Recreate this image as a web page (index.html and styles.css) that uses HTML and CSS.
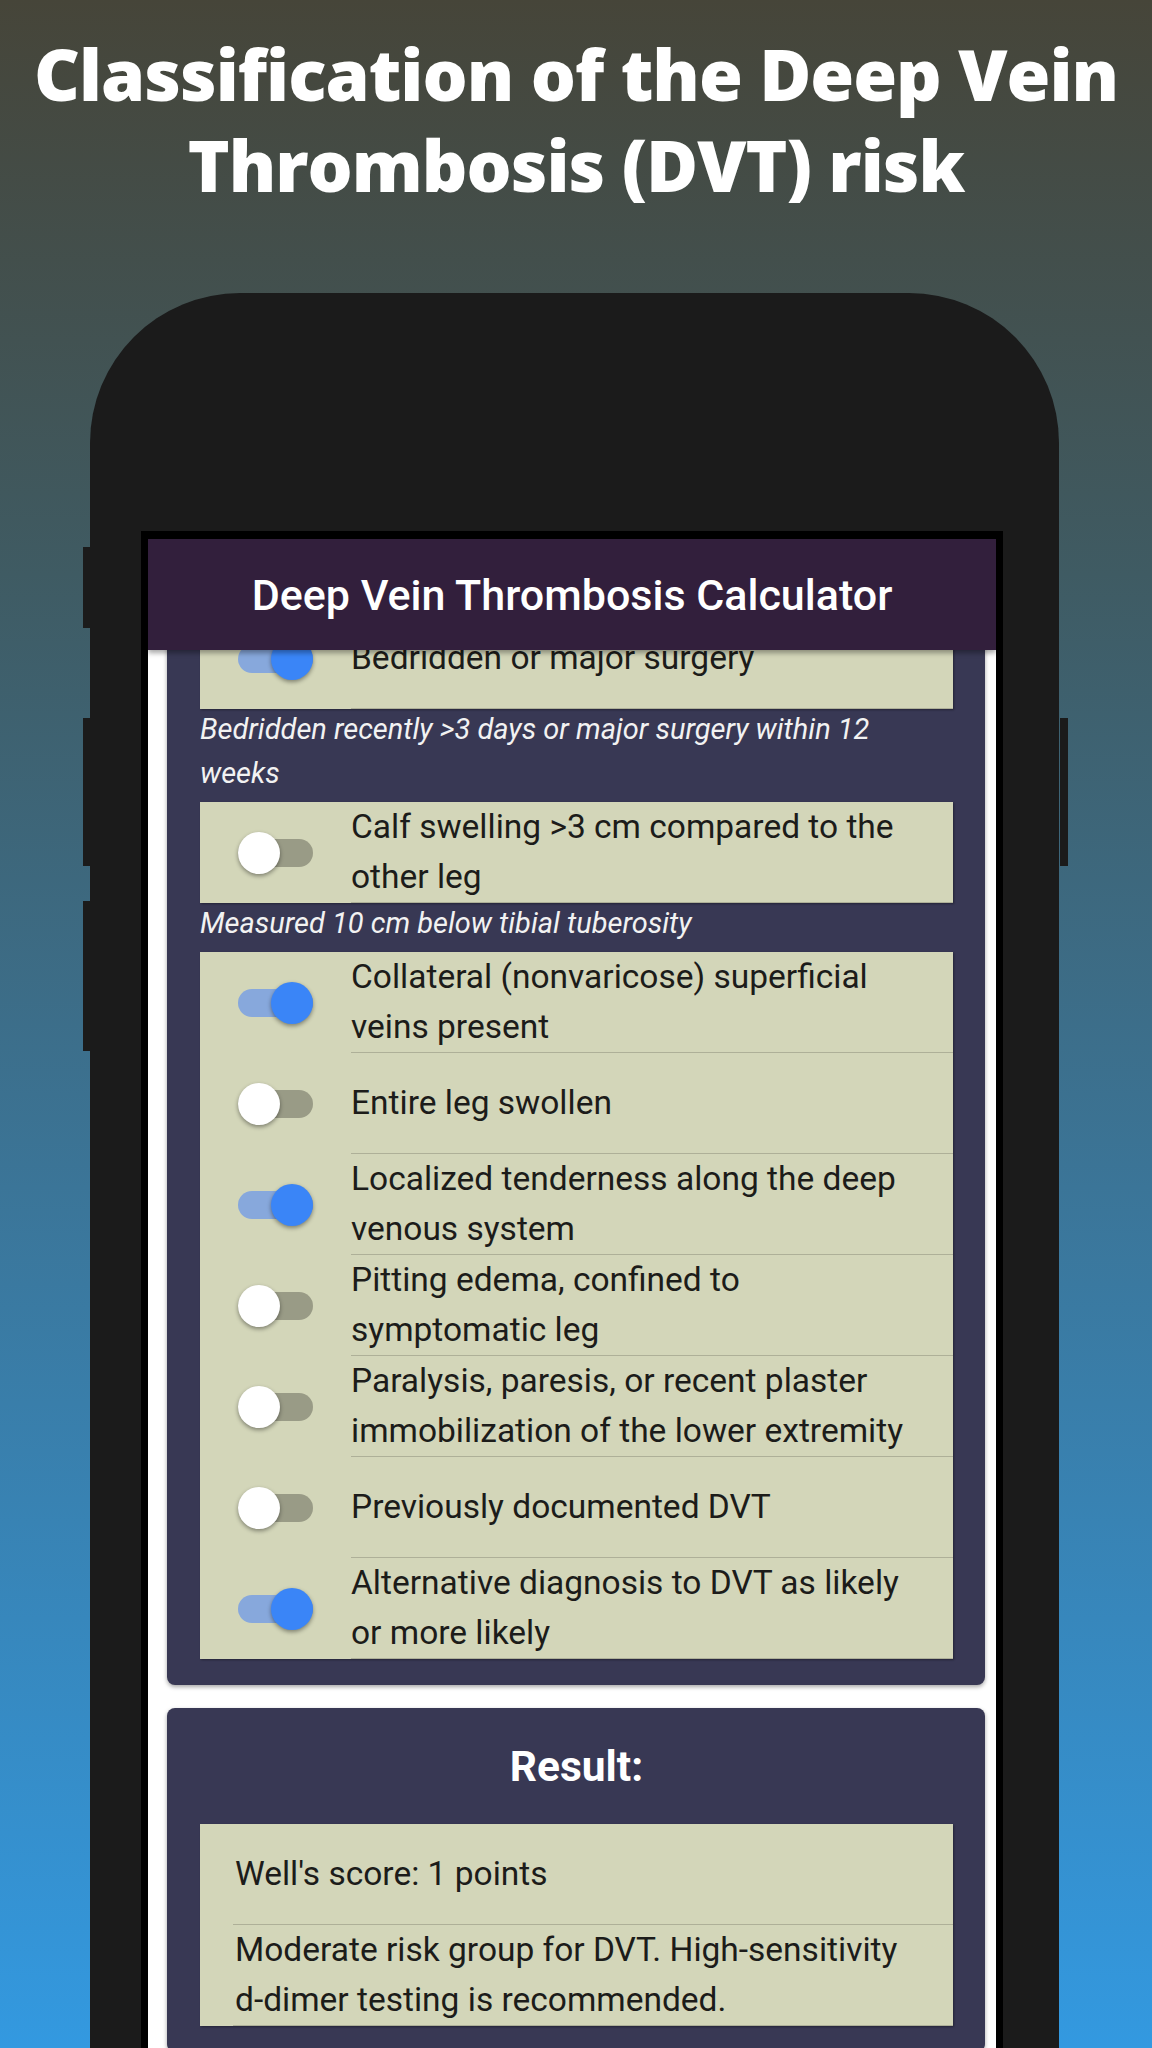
FILE: index.html
```html
<!DOCTYPE html>
<html lang="en">
<head>
<meta charset="utf-8">
<title>Deep Vein Thrombosis Calculator</title>
<link rel="stylesheet" href="styles.css">
</head>
<body>
<div class="page">
  <h1 class="headline">Classification of the Deep Vein<br>Thrombosis (DVT) risk</h1>
  <div class="phone">
    <span class="btn btn-l1"></span>
    <span class="btn btn-l2"></span>
    <span class="btn btn-l3"></span>
    <span class="btn btn-r1"></span>
    <div class="screen">
      <div class="appbar">Deep Vein Thrombosis Calculator</div>
      <div class="viewport">
        <div class="scroll">
          <section class="card">
            <div class="block">
              <div class="row"><div class="tcell"><span class="switch on"><span class="knob"></span></span></div><div class="label">Bedridden or major surgery</div></div>
            </div>
            <p class="note">Bedridden recently &gt;3 days or major surgery within 12 weeks</p>
            <div class="block">
              <div class="row"><div class="tcell"><span class="switch"><span class="knob"></span></span></div><div class="label">Calf swelling &gt;3 cm compared to the other leg</div></div>
            </div>
            <p class="note">Measured 10 cm below tibial tuberosity</p>
            <div class="block">
              <div class="row"><div class="tcell"><span class="switch on"><span class="knob"></span></span></div><div class="label">Collateral (nonvaricose) superficial veins present</div></div>
              <div class="row"><div class="tcell"><span class="switch"><span class="knob"></span></span></div><div class="label">Entire leg swollen</div></div>
              <div class="row"><div class="tcell"><span class="switch on"><span class="knob"></span></span></div><div class="label">Localized tenderness along the deep venous system</div></div>
              <div class="row"><div class="tcell"><span class="switch"><span class="knob"></span></span></div><div class="label">Pitting edema, confined to symptomatic leg</div></div>
              <div class="row"><div class="tcell"><span class="switch"><span class="knob"></span></span></div><div class="label">Paralysis, paresis, or recent plaster immobilization of the lower extremity</div></div>
              <div class="row"><div class="tcell"><span class="switch"><span class="knob"></span></span></div><div class="label">Previously documented DVT</div></div>
              <div class="row"><div class="tcell"><span class="switch on"><span class="knob"></span></span></div><div class="label">Alternative diagnosis to DVT as likely or more likely</div></div>
            </div>
          </section>
          <section class="card result">
            <h2 class="result-title">Result:</h2>
            <div class="block">
              <div class="rrow"><div class="label">Well's score: 1 points</div></div>
              <div class="rrow"><div class="label"><span>Moderate risk group for DVT. High-sensitivity <span class="nowrap">d-dimer</span> testing is recommended.</span></div></div>
            </div>
          </section>
        </div>
      </div>
    </div>
  </div>
</div>
</body>
</html>
```
FILE: styles.css
```css
html, body {
  margin: 0;
  padding: 0;
}
body {
  width: 1152px;
  height: 2048px;
  overflow: hidden;
  background: linear-gradient(to bottom, #464539 0%, #3f5b63 28%, #3b7598 58%, #3399e0 100%);
  font-family: Roboto, "Liberation Sans", Arial, sans-serif;
}
.page {
  width: 1152px;
  height: 2048px;
  overflow: hidden;
}
.headline {
  margin: 0;
  padding-top: 28px;
  font-family: "Open Sans", "Liberation Sans", sans-serif;
  font-weight: 800;
  font-size: 71px;
  line-height: 91px;
  color: #ffffff;
  text-align: center;
  letter-spacing: -1px;
}
.phone {
  position: relative;
  margin: 83px 0 0 90px;
  width: 969px;
  height: 1900px;
  background: #1b1b1b;
  border-radius: 150px 150px 0 0;
  padding-top: 238px;
  box-sizing: border-box;
}
.btn {
  position: absolute;
  background: #1b1b1b;
  width: 8px;
}
.btn-l1 { left: -7px; top: 254px; height: 81px; }
.btn-l2 { left: -7px; top: 425px; height: 148px; }
.btn-l3 { left: -7px; top: 608px; height: 150px; }
.btn-r1 { right: -9px; top: 425px; height: 148px; }
.screen {
  margin-left: 51px;
  width: 862px;
  height: 1700px;
  background: #000;
  padding: 8px 7px 0 7px;
  box-sizing: border-box;
  display: flex;
  flex-direction: column;
}
.appbar {
  position: relative;
  z-index: 2;
  height: 111px;
  flex: none;
  background: #321f3c;
  color: #ffffff;
  font-weight: 500;
  font-size: 43px;
  display: flex;
  align-items: center;
  justify-content: center;
  box-shadow: 0 3px 5px rgba(0,0,0,0.35);
}
.viewport {
  flex: 1;
  background: #ffffff;
  overflow: hidden;
}
.scroll {
  margin-top: -76px;
  padding: 0 11px 0 19px;
}
.card {
  background: #383854;
  border-radius: 8px;
  padding: 34px 32px 26px 33px;
  box-shadow: 0 2px 4px rgba(0,0,0,0.35);
  margin-bottom: 23px;
}
.block {
  background: #d3d6b9;
  box-shadow: 1px 1px 2px rgba(0,0,0,0.35);
}
.row, .rrow {
  display: flex;
}
.tcell {
  width: 151px;
  flex: none;
  display: flex;
  align-items: center;
}
.switch {
  position: relative;
  margin-left: 38px;
  width: 75px;
  height: 28px;
  border-radius: 14px;
  background: #999b86;
}
.switch.on {
  background: #87a8dc;
}
.knob {
  position: absolute;
  left: 0;
  top: -7px;
  width: 42px;
  height: 42px;
  border-radius: 50%;
  background: #ffffff;
  box-shadow: 0 2px 4px rgba(0,0,0,0.4);
}
.switch.on .knob {
  left: auto;
  right: 0;
  background: #3a85f7;
}
.label {
  flex: 1;
  min-height: 100px;
  display: flex;
  align-items: center;
  padding-right: 36px;
  border-bottom: 1px solid #aeb098;
  font-size: 33.5px;
  line-height: 50px;
  color: #1c1c1a;
}
.nowrap {
  white-space: nowrap;
}
.note {
  margin: -2px 0 7px 0;
  font-style: italic;
  font-size: 29px;
  line-height: 44px;
  color: #f2f2f2;
}
.result-title {
  margin: 0 0 32px 0;
  text-align: center;
  font-size: 42.5px;
  font-weight: 700;
  line-height: 50px;
  color: #ffffff;
}
.rrow .label {
  margin-left: 33px;
  padding-left: 2px;
}
```
